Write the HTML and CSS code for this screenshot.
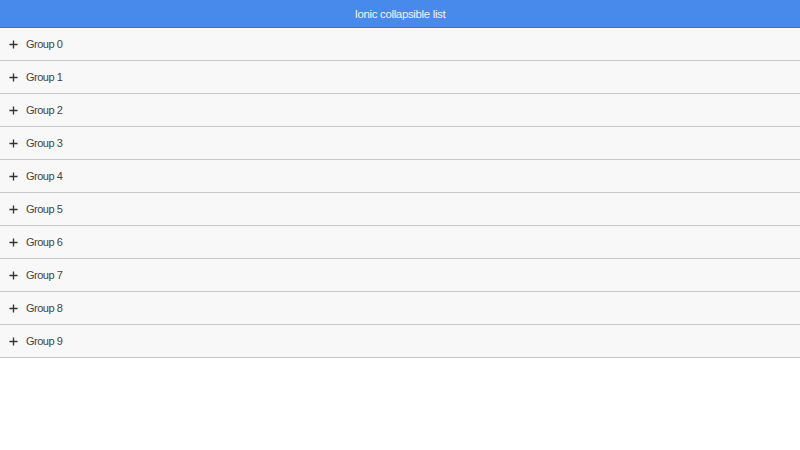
FILE: index.html
```html
<!DOCTYPE html>
<html>
<head>
<meta charset="utf-8">
<link rel="stylesheet" href="styles.css">
</head>
<body>
<header class="bar"><h1 class="title">Ionic collapsible list</h1></header>
<ul class="list">
  <li class="item"><svg class="plus" viewBox="0 0 10 10"><path d="M5 0.5V9.5M0.5 5H9.5"/></svg><span>Group 0</span></li>
  <li class="item"><svg class="plus" viewBox="0 0 10 10"><path d="M5 0.5V9.5M0.5 5H9.5"/></svg><span>Group 1</span></li>
  <li class="item"><svg class="plus" viewBox="0 0 10 10"><path d="M5 0.5V9.5M0.5 5H9.5"/></svg><span>Group 2</span></li>
  <li class="item"><svg class="plus" viewBox="0 0 10 10"><path d="M5 0.5V9.5M0.5 5H9.5"/></svg><span>Group 3</span></li>
  <li class="item"><svg class="plus" viewBox="0 0 10 10"><path d="M5 0.5V9.5M0.5 5H9.5"/></svg><span>Group 4</span></li>
  <li class="item"><svg class="plus" viewBox="0 0 10 10"><path d="M5 0.5V9.5M0.5 5H9.5"/></svg><span>Group 5</span></li>
  <li class="item"><svg class="plus" viewBox="0 0 10 10"><path d="M5 0.5V9.5M0.5 5H9.5"/></svg><span>Group 6</span></li>
  <li class="item"><svg class="plus" viewBox="0 0 10 10"><path d="M5 0.5V9.5M0.5 5H9.5"/></svg><span>Group 7</span></li>
  <li class="item"><svg class="plus" viewBox="0 0 10 10"><path d="M5 0.5V9.5M0.5 5H9.5"/></svg><span>Group 8</span></li>
  <li class="item"><svg class="plus" viewBox="0 0 10 10"><path d="M5 0.5V9.5M0.5 5H9.5"/></svg><span>Group 9</span></li>
</ul>
</body>
</html>
```
FILE: styles.css
```css
html, body {
  margin: 0;
  padding: 0;
  background: #ffffff;
  font-family: "Liberation Sans", Arial, sans-serif;
}
.bar {
  height: 27px;
  background: #488aec;
  border-bottom: 1px solid #3a75cc;
  display: flex;
  align-items: center;
  justify-content: center;
}
.title {
  margin: 0;
  font-size: 11.5px;
  letter-spacing: -0.35px;
  font-weight: 400;
  color: #eef3fd;
}
.list {
  list-style: none;
  margin: 0;
  padding: 0;
}
.item {
  height: 32px;
  background: #f8f8f8;
  border-bottom: 1px solid #c8c8c8;
  display: flex;
  align-items: center;
  padding-left: 9px;
  font-size: 11px;
  letter-spacing: -0.5px;
  color: #444444;
}
.plus {
  width: 9px;
  height: 9px;
  margin-right: 8px;
}
.plus path {
  stroke: #333333;
  stroke-width: 1.5;
  fill: none;
}
```
